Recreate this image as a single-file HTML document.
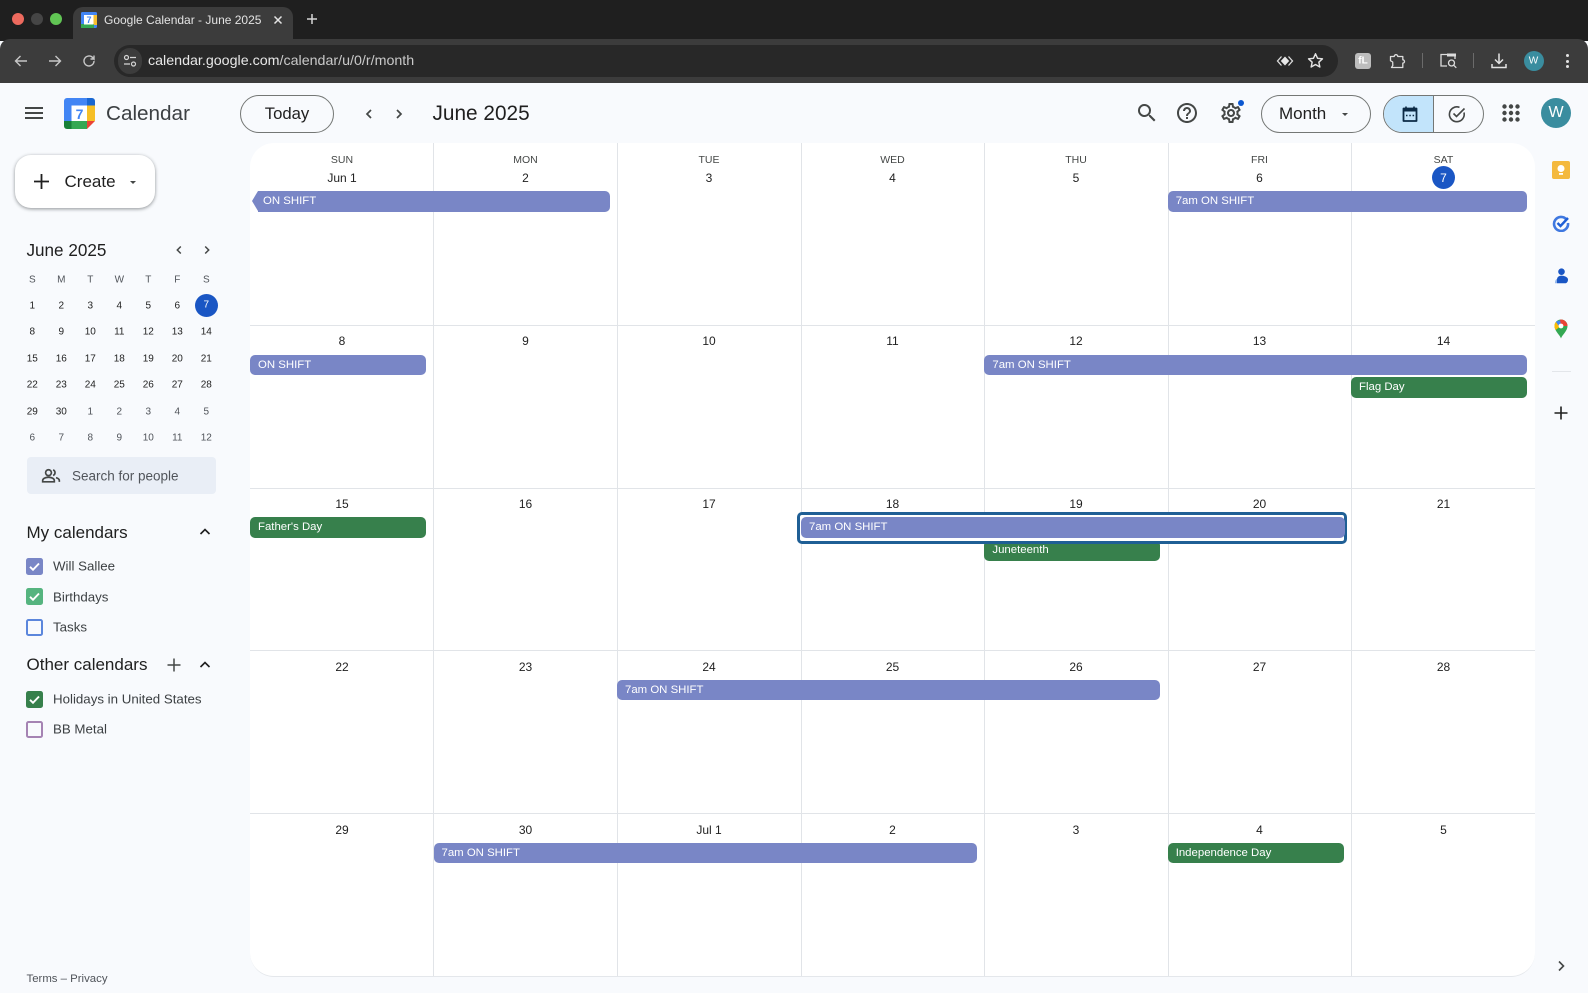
<!DOCTYPE html>
<html><head><meta charset="utf-8"><title>Google Calendar - June 2025</title>
<style>
html,body{margin:0;padding:0;width:1588px;height:993px;overflow:hidden;background:#f8fafd;font-family:"Liberation Sans",sans-serif;color:#1f1f1f}
div,span,svg{position:absolute;box-sizing:border-box}
.c{transform:translate(-50%,-50%);white-space:nowrap}
.l{transform:translateY(-50%);white-space:nowrap}
.d{font-size:12px;color:#1f1f1f}
.h{font-size:10.5px;color:#444746}
.m{font-size:10px;color:#1f1f1f}
.mg{font-size:10px;color:#50545a}
.e{height:20.5px;background:#7986c6;border-radius:5px;color:#fff;font-size:11.4px;line-height:21.5px;padding-left:8px;white-space:nowrap}
.g{background:#37804c}
.v{top:143px;width:1px;height:833px;background:#e1e4e8}
.x{left:0;width:1285px;height:1px;background:#e1e4e8}
.cb{left:26px;width:17px;height:17px;border-radius:2.5px}
.cl{left:53px;font-size:13.3px;color:#3c4043}
.pill{border:1px solid #747775;border-radius:20px}
</style></head><body>

<!-- browser chrome -->
<div style="left:0;top:0;width:1588px;height:41px;background:#1f1f1f"></div>
<div style="left:0;top:39px;width:1588px;height:44px;background:#3c3c3c;border-radius:10px 10px 0 0"></div>
<div style="left:12px;top:13px;width:12px;height:12px;border-radius:50%;background:#ed6a5e"></div>
<div style="left:31px;top:13px;width:12px;height:12px;border-radius:50%;background:#454545"></div>
<div style="left:50px;top:13px;width:12px;height:12px;border-radius:50%;background:#61c554"></div>
<div style="left:73px;top:7px;width:220px;height:36px;background:#3c3c3c;border-radius:10px 10px 0 0"></div>
<svg style="left:81px;top:12px" width="16" height="16" viewBox="0 0 16 16"><rect width="16" height="16" rx="1.5" fill="#4285f4"/><rect x="12" y="3" width="4" height="10" fill="#f5bd2f"/><rect y="12" width="13" height="4" fill="#34a853"/><rect x="3" y="3" width="9.5" height="9.5" fill="#fff"/></svg>
<span class="c" style="left:89px;top:20px;font-size:9px;font-weight:bold;color:#4285f4">7</span>
<span class="l" style="left:104px;top:19.5px;font-size:12px;color:#e3e3e3">Google Calendar - June 2025</span>
<svg style="left:272px;top:14px" width="12" height="12" viewBox="0 0 12 12"><path d="M2.5 2.5l7 7M9.5 2.5l-7 7" stroke="#e3e3e3" stroke-width="1.5"/></svg>
<svg style="left:305px;top:12px" width="14" height="14" viewBox="0 0 14 14"><path d="M7 2v10M2 7h10" stroke="#d5d5d5" stroke-width="1.5"/></svg>
<svg style="left:12px;top:52px" width="18" height="18" viewBox="0 0 18 18"><path d="M15 9H4M8.5 4L3.5 9l5 5" fill="none" stroke="#c7c7c7" stroke-width="1.4"/></svg>
<svg style="left:46px;top:52px" width="18" height="18" viewBox="0 0 18 18"><path d="M3 9h11M9.5 4l5 5-5 5" fill="none" stroke="#c7c7c7" stroke-width="1.4"/></svg>
<svg style="left:80px;top:52px" width="18" height="18" viewBox="0 0 18 18"><path d="M14 9a5 5 0 1 1-1.5-3.6L14 7V3.5M14 7h-3.5" fill="none" stroke="#c7c7c7" stroke-width="1.4"/></svg>
<div style="left:114px;top:45px;width:1224px;height:32px;background:#282828;border-radius:16px"></div>
<div style="left:118px;top:48px;width:24px;height:26px;background:#3c3c3c;border-radius:13px"></div>
<svg style="left:122px;top:53px" width="16" height="16" viewBox="0 0 16 16"><circle cx="4.5" cy="4.5" r="2" fill="none" stroke="#d5d5d5" stroke-width="1.2"/><path d="M8 4.5h6M2 11h6" stroke="#d5d5d5" stroke-width="1.2"/><circle cx="11.5" cy="11" r="2" fill="none" stroke="#d5d5d5" stroke-width="1.2"/></svg>
<span class="l" style="left:148px;top:60.5px;font-size:14.25px;color:#e8e8e8">calendar.google.com<span style="position:static;color:#c9c9c9">/calendar/u/0/r/month</span></span>
<svg style="left:1276px;top:52px" width="18" height="18" viewBox="0 0 18 18"><path d="M5.5 4.5L1.5 9l4 4.5M12.5 4.5l4 4.5-4 4.5" fill="none" stroke="#dcdcdc" stroke-width="1.3"/><path d="M9 4.5L13.2 9 9 13.5 4.8 9z" fill="#e8e8e8"/></svg>
<svg style="left:1306px;top:51px" width="19" height="19" viewBox="0 0 24 24"><path d="M12 3.5l2.6 5.7 6.2.7-4.6 4.2 1.3 6.1L12 17.1l-5.5 3.100 1.3-6.1-4.6-4.2 6.2-.7z" fill="none" stroke="#e3e3e3" stroke-width="1.8" stroke-linejoin="round"/></svg>
<div style="left:1355px;top:53px;width:16px;height:16px;border-radius:3px;background:#bdbdbd"></div>
<span class="c" style="left:1363px;top:61px;font-size:10px;font-weight:bold;color:#fff">fL</span>
<svg style="left:1388px;top:52px" width="18" height="18" viewBox="0 0 18 18"><path d="M2.5 4.5h3.7a1.8 1.8 0 0 1 3.6 0h5v3.300a1.7 1.7 0 0 1 0 3.400v4.300H3.5l1.3-2-.1-3.500-2.200-1.300z" fill="none" stroke="#dcdcdc" stroke-width="1.3" stroke-linejoin="round"/></svg>
<div style="left:1422px;top:53px;width:1px;height:15px;background:#6b6b6b"></div>
<svg style="left:1439px;top:52px" width="20" height="18" viewBox="0 0 20 18"><path d="M8 14H2V2.5h14V7" fill="none" stroke="#dcdcdc" stroke-width="1.3"/><rect x="8" y="1.500" width="9" height="3" fill="#dcdcdc"/><circle cx="12.5" cy="11" r="3" fill="none" stroke="#dcdcdc" stroke-width="1.3"/><path d="M14.8 13.3l2.5 2.5" stroke="#dcdcdc" stroke-width="1.3"/></svg>
<div style="left:1473px;top:53px;width:1px;height:15px;background:#6b6b6b"></div>
<svg style="left:1490px;top:52px" width="18" height="18" viewBox="0 0 18 18"><path d="M9 1.5v10M5 7.500l4 4 4-4" fill="none" stroke="#e3e3e3" stroke-width="1.5"/><path d="M2 12v3.500h14V12" fill="none" stroke="#e3e3e3" stroke-width="1.5"/></svg>
<div style="left:1523.5px;top:51px;width:20px;height:20px;border-radius:50%;background:#3a8d9f"></div>
<span class="c" style="left:1533.5px;top:61px;font-size:10px;color:#fff">W</span>
<div style="left:1565.5px;top:54px;width:3px;height:3px;border-radius:50%;background:#e3e3e3"></div>
<div style="left:1565.5px;top:59.5px;width:3px;height:3px;border-radius:50%;background:#e3e3e3"></div>
<div style="left:1565.5px;top:65px;width:3px;height:3px;border-radius:50%;background:#e3e3e3"></div>

<!-- app header -->
<svg style="left:22px;top:101px" width="24" height="24" viewBox="0 0 24 24"><path d="M3 18h18v-2H3v2zm0-5h18v-2H3v2zm0-7v2h18V6H3z" fill="#444746"/></svg>
<svg style="left:64px;top:98px" width="31" height="31" viewBox="0 0 31 31"><path d="M3 0h20v7.5H7.5V23H0V3a3 3 0 0 1 3-3z" fill="#4285f4"/><path d="M23 0h5a3 3 0 0 1 3 3v4.5h-8z" fill="#1967d2"/><rect x="23" y="7.5" width="8" height="15.5" fill="#f6bf26"/><path d="M0 23h7.5v8H3a3 3 0 0 1-3-3z" fill="#188038"/><rect x="7.5" y="23" width="15.5" height="8" fill="#34a853"/><path d="M23 23h8l-8 8z" fill="#ea4335"/><rect x="7.5" y="7.5" width="15.5" height="15.5" fill="#fff"/></svg>
<span class="c" style="left:79.5px;top:113.5px;font-size:14px;font-weight:bold;color:#4285f4">7</span>
<span class="l" style="left:106px;top:113.5px;font-size:20.7px;color:#3c4043">Calendar</span>
<div class="pill" style="left:240px;top:95px;width:94px;height:38px"></div>
<span class="c" style="left:287px;top:113.5px;font-size:16.7px;color:#1f1f1f">Today</span>
<svg style="left:359.5px;top:104.5px" width="18" height="18" viewBox="0 0 18 18"><path d="M11 5L7 9l4 4" fill="none" stroke="#444746" stroke-width="1.7"/></svg>
<svg style="left:389.5px;top:104.5px" width="18" height="18" viewBox="0 0 18 18"><path d="M7 5l4 4-4 4" fill="none" stroke="#444746" stroke-width="1.7"/></svg>
<span class="l" style="left:432.5px;top:113.5px;font-size:20.8px;color:#1f1f1f">June 2025</span>
<svg style="left:1135px;top:101px" width="24" height="24" viewBox="0 0 24 24"><path d="M15.5 14h-.79l-.28-.27A6.471 6.471 0 0 0 16 9.5 6.5 6.5 0 1 0 9.5 16c1.61 0 3.09-.59 4.23-1.57l.27.28v.79l5 4.99L20.49 19l-4.99-5zm-6 0C7.01 14 5 11.99 5 9.5S7.01 5 9.5 5 14 7.01 14 9.5 11.99 14 9.5 14z" fill="#444746"/></svg>
<svg style="left:1175px;top:101px" width="24" height="24" viewBox="0 0 24 24"><path d="M11 18h2v-2h-2v2zm1-16C6.48 2 2 6.48 2 12s4.48 10 10 10 10-4.48 10-10S17.52 2 12 2zm0 18c-4.41 0-8-3.59-8-8s3.59-8 8-8 8 3.59 8 8-3.59 8-8 8zm0-14c-2.21 0-4 1.79-4 4h2c0-1.1.9-2 2-2s2 .9 2 2c0 2-3 1.75-3 5h2c0-2.25 3-2.5 3-5 0-2.21-1.79-4-4-4z" fill="#444746"/></svg>
<svg style="left:1219px;top:101px" width="24" height="24" viewBox="0 0 24 24"><path d="M19.43 12.98c.04-.32.07-.64.07-.98 0-.34-.03-.66-.07-.98l2.11-1.65c.19-.15.24-.42.12-.64l-2-3.46c-.09-.16-.26-.25-.44-.25-.06 0-.12.01-.17.03l-2.49 1c-.52-.4-1.08-.73-1.69-.98l-.38-2.65C14.46 2.18 14.25 2 14 2h-4c-.25 0-.46.18-.49.42l-.38 2.65c-.61.25-1.17.59-1.69.98l-2.49-1c-.06-.02-.12-.03-.18-.03-.17 0-.34.09-.43.25l-2 3.46c-.13.22-.07.49.12.64l2.11 1.65c-.04.32-.07.65-.07.98 0 .33.03.66.07.98l-2.11 1.65c-.19.15-.24.42-.12.64l2 3.46c.09.16.26.25.44.25.06 0 .12-.01.17-.03l2.49-1c.52.4 1.08.73 1.69.98l.38 2.65c.03.24.24.42.49.42h4c.25 0 .46-.18.49-.42l.38-2.65c.61-.25 1.17-.59 1.69-.98l2.49 1c.06.02.12.03.18.03.17 0 .34-.09.43-.25l2-3.46c.12-.22.07-.49-.12-.64l-2.11-1.65zm-1.98-1.71c.04.31.05.52.05.73 0 .21-.02.43-.05.73l-.14 1.13.89.7 1.08.84-.7 1.21-1.27-.51-1.04-.42-.9.68c-.43.32-.84.56-1.25.73l-1.06.43-.16 1.13-.2 1.35h-1.4l-.19-1.35-.16-1.13-1.06-.43c-.43-.18-.83-.41-1.23-.71l-.91-.7-1.06.43-1.27.51-.7-1.21 1.08-.84.89-.7-.14-1.13c-.03-.31-.05-.54-.05-.74s.02-.43.05-.73l.14-1.13-.89-.7-1.08-.84.7-1.21 1.27.51 1.04.42.9-.68c.43-.32.84-.56 1.25-.73l1.06-.43.16-1.13.2-1.35h1.39l.19 1.35.16 1.13 1.06.43c.43.18.83.41 1.23.71l.91.7 1.06-.43 1.27-.51.7 1.21-1.07.85-.89.7.14 1.13zM12 8c-2.21 0-4 1.79-4 4s1.79 4 4 4 4-1.79 4-4-1.79-4-4-4zm0 6c-1.1 0-2-.9-2-2s.9-2 2-2 2 .9 2 2-.9 2-2 2z" fill="#444746"/></svg>
<div style="left:1238px;top:100px;width:6px;height:6px;border-radius:50%;background:#0b57d0"></div>
<div class="pill" style="left:1261px;top:95px;width:110px;height:38px"></div>
<span class="l" style="left:1279px;top:113.5px;font-size:17px;color:#1f1f1f">Month</span>
<div style="left:1341.5px;top:112.5px;width:0;height:0;border-left:3.5px solid transparent;border-right:3.5px solid transparent;border-top:3.5px solid #444746"></div>
<div class="pill" style="left:1383px;top:95px;width:101px;height:38px;overflow:hidden"><div style="left:0;top:0;width:49px;height:36px;background:#c2e4fb"></div><div style="left:49px;top:0;width:1px;height:36px;background:#747775"></div></div>
<svg style="left:1400px;top:104px" width="20" height="20" viewBox="0 0 20 20"><path d="M3.500 4.500h13v12.500h-13z" fill="none" stroke="#0c2a45" stroke-width="1.800" stroke-linejoin="round"/><rect x="3" y="4" width="14" height="3.500" fill="#0c2a45"/><path d="M6 2.500v3M14 2.500v3" stroke="#0c2a45" stroke-width="1.600"/><path d="M6 11.500h1.500M9.300 11.500h1.500M12.600 11.500h1.500" stroke="#0c2a45" stroke-width="1.500"/></svg>
<svg style="left:1447px;top:104px" width="20" height="20" viewBox="0 0 20 20"><path d="M17 8.500A7.400 7.400 0 1 1 12.500 3.400" fill="none" stroke="#444746" stroke-width="1.600"/><path d="M6.500 9.500l3 3 8-8" fill="none" stroke="#444746" stroke-width="1.600"/></svg>
<svg style="left:1502px;top:104px" width="18" height="18" viewBox="0 0 18 18" fill="#444746"><circle cx="2.500" cy="2.500" r="2.200"/><circle cx="9" cy="2.500" r="2.200"/><circle cx="15.500" cy="2.500" r="2.200"/><circle cx="2.500" cy="9" r="2.200"/><circle cx="9" cy="9" r="2.200"/><circle cx="15.500" cy="9" r="2.200"/><circle cx="2.500" cy="15.500" r="2.200"/><circle cx="9" cy="15.500" r="2.200"/><circle cx="15.500" cy="15.500" r="2.200"/></svg>
<div style="left:1541px;top:98px;width:30px;height:30px;border-radius:50%;background:#3a8d9f"></div>
<span class="c" style="left:1556px;top:113px;font-size:16px;color:#fff">W</span>

<!-- create -->
<div style="left:15px;top:155px;width:140px;height:53px;background:#fff;border-radius:16px;box-shadow:0 1px 3px rgba(60,64,67,.4),0 1px 4px rgba(60,64,67,.2)"></div>
<svg style="left:31px;top:171px" width="21" height="21" viewBox="0 0 21 21"><path d="M10.500 3v15M3 10.500h15" stroke="#1f1f1f" stroke-width="1.800"/></svg>
<span class="l" style="left:64.5px;top:181.5px;font-size:17px;color:#1f1f1f">Create</span>
<div style="left:129.5px;top:180.5px;width:0;height:0;border-left:3.5px solid transparent;border-right:3.5px solid transparent;border-top:3.5px solid #444746"></div>

<!-- mini calendar -->
<span class="l" style="left:26.5px;top:250.5px;font-size:17.1px;color:#1f1f1f">June 2025</span>
<svg style="left:170.500px;top:242px" width="16" height="16" viewBox="0 0 16 16"><path d="M9.800 4.500L6.300 8l3.500 3.500" fill="none" stroke="#444746" stroke-width="1.500"/></svg>
<svg style="left:198.500px;top:242px" width="16" height="16" viewBox="0 0 16 16"><path d="M6.200 4.500L9.700 8l-3.500 3.500" fill="none" stroke="#444746" stroke-width="1.500"/></svg>
<span class="c mg" style="left:32.3px;top:279.5px">S</span><span class="c mg" style="left:61.3px;top:279.5px">M</span><span class="c mg" style="left:90.3px;top:279.5px">T</span><span class="c mg" style="left:119.3px;top:279.5px">W</span><span class="c mg" style="left:148.3px;top:279.5px">T</span><span class="c mg" style="left:177.3px;top:279.5px">F</span><span class="c mg" style="left:206.3px;top:279.5px">S</span>
<span class="c m" style="left:32.3px;top:306px">1</span><span class="c m" style="left:61.3px;top:306px">2</span><span class="c m" style="left:90.3px;top:306px">3</span><span class="c m" style="left:119.3px;top:306px">4</span><span class="c m" style="left:148.3px;top:306px">5</span><span class="c m" style="left:177.3px;top:306px">6</span>
<div style="left:194.8px;top:293.8px;width:23px;height:23px;border-radius:50%;background:#1a56c4"></div><span class="c m" style="left:206.3px;top:305.3px;color:#fff">7</span>
<span class="c m" style="left:32.3px;top:332.4px">8</span><span class="c m" style="left:61.3px;top:332.4px">9</span><span class="c m" style="left:90.3px;top:332.4px">10</span><span class="c m" style="left:119.3px;top:332.4px">11</span><span class="c m" style="left:148.3px;top:332.4px">12</span><span class="c m" style="left:177.3px;top:332.4px">13</span><span class="c m" style="left:206.3px;top:332.4px">14</span>
<span class="c m" style="left:32.3px;top:358.9px">15</span><span class="c m" style="left:61.3px;top:358.9px">16</span><span class="c m" style="left:90.3px;top:358.9px">17</span><span class="c m" style="left:119.3px;top:358.9px">18</span><span class="c m" style="left:148.3px;top:358.9px">19</span><span class="c m" style="left:177.3px;top:358.9px">20</span><span class="c m" style="left:206.3px;top:358.9px">21</span>
<span class="c m" style="left:32.3px;top:385.4px">22</span><span class="c m" style="left:61.3px;top:385.4px">23</span><span class="c m" style="left:90.3px;top:385.4px">24</span><span class="c m" style="left:119.3px;top:385.4px">25</span><span class="c m" style="left:148.3px;top:385.4px">26</span><span class="c m" style="left:177.3px;top:385.4px">27</span><span class="c m" style="left:206.3px;top:385.4px">28</span>
<span class="c m" style="left:32.3px;top:411.9px">29</span><span class="c m" style="left:61.3px;top:411.9px">30</span><span class="c mg" style="left:90.3px;top:411.9px">1</span><span class="c mg" style="left:119.3px;top:411.9px">2</span><span class="c mg" style="left:148.3px;top:411.9px">3</span><span class="c mg" style="left:177.3px;top:411.9px">4</span><span class="c mg" style="left:206.3px;top:411.9px">5</span>
<span class="c mg" style="left:32.3px;top:438.4px">6</span><span class="c mg" style="left:61.3px;top:438.4px">7</span><span class="c mg" style="left:90.3px;top:438.4px">8</span><span class="c mg" style="left:119.3px;top:438.4px">9</span><span class="c mg" style="left:148.3px;top:438.4px">10</span><span class="c mg" style="left:177.3px;top:438.4px">11</span><span class="c mg" style="left:206.3px;top:438.4px">12</span>

<div style="left:26.5px;top:457px;width:189px;height:37px;background:#e9eef6;border-radius:4px"></div>
<svg style="left:41px;top:466px" width="20" height="20" viewBox="0 0 24 24"><circle cx="9" cy="8" r="3.5" fill="none" stroke="#444746" stroke-width="2"/><path d="M2 19v-1.500c0-2.500 3.500-4 7-4s7 1.500 7 4V19z" fill="none" stroke="#444746" stroke-width="2"/><path d="M14.500 4.700a3.500 3.500 0 0 1 0 6.600M18 14c2.300.6 4 1.800 4 3.500V19" fill="none" stroke="#444746" stroke-width="2"/></svg>
<span class="l" style="left:72px;top:475.5px;font-size:13.5px;color:#50545a">Search for people</span>

<!-- my calendars -->
<span class="l" style="left:26.5px;top:532.5px;font-size:17px;color:#1f1f1f">My calendars</span>
<svg style="left:197px;top:524px" width="16" height="16" viewBox="0 0 16 16"><path d="M3.500 10L8 5.500l4.500 4.500" fill="none" stroke="#1f1f1f" stroke-width="1.600"/></svg>
<div class="cb" style="top:558px;background:#7986c6"></div>
<svg style="left:26px;top:558px" width="17" height="17" viewBox="0 0 17 17"><path d="M4 8.800l3 3 6-6.300" fill="none" stroke="#fff" stroke-width="1.900"/></svg>
<span class="l cl" style="top:566px">Will Sallee</span>
<div class="cb" style="top:588px;background:#55b47f"></div>
<svg style="left:26px;top:588px" width="17" height="17" viewBox="0 0 17 17"><path d="M4 8.800l3 3 6-6.300" fill="none" stroke="#fff" stroke-width="1.900"/></svg>
<span class="l cl" style="top:596.5px">Birthdays</span>
<div class="cb" style="top:618.5px;border:2px solid #5b86dc"></div>
<span class="l cl" style="top:626.5px">Tasks</span>
<span class="l" style="left:26.5px;top:665px;font-size:17px;color:#1f1f1f">Other calendars</span>
<svg style="left:166px;top:657px" width="16" height="16" viewBox="0 0 16 16"><path d="M8 1.500v13M1.500 8h13" stroke="#444746" stroke-width="1.500"/></svg>
<svg style="left:197px;top:657px" width="16" height="16" viewBox="0 0 16 16"><path d="M3.500 10L8 5.500l4.500 4.500" fill="none" stroke="#1f1f1f" stroke-width="1.600"/></svg>
<div class="cb" style="top:690.5px;background:#37804c"></div>
<svg style="left:26px;top:690.5px" width="17" height="17" viewBox="0 0 17 17"><path d="M4 8.800l3 3 6-6.300" fill="none" stroke="#fff" stroke-width="1.900"/></svg>
<span class="l cl" style="top:698.5px">Holidays in United States</span>
<div class="cb" style="top:720.5px;border:2px solid #a583b3"></div>
<span class="l cl" style="top:728.5px">BB Metal</span>
<span class="l" style="left:26.5px;top:978.5px;font-size:11.4px;color:#50545a">Terms – Privacy</span>

<!-- grid -->
<div style="left:250px;top:143px;width:1285px;height:834px;background:#fff;border-radius:24px;overflow:hidden;border-bottom:1px solid #e4e7eb">
 <div class="x" style="top:182px"></div><div class="x" style="top:345px"></div><div class="x" style="top:507px"></div><div class="x" style="top:670px"></div>
</div>
<div class="v" style="left:433px"></div><div class="v" style="left:616.5px"></div><div class="v" style="left:801px"></div><div class="v" style="left:984.4px"></div><div class="v" style="left:1167.7px"></div><div class="v" style="left:1351px"></div>

<span class="c h" style="left:342px;top:159.5px">SUN</span><span class="c h" style="left:525.5px;top:159.5px">MON</span><span class="c h" style="left:709px;top:159.5px">TUE</span><span class="c h" style="left:892.5px;top:159.5px">WED</span><span class="c h" style="left:1076px;top:159.5px">THU</span><span class="c h" style="left:1259.5px;top:159.5px">FRI</span><span class="c h" style="left:1443.5px;top:159.5px">SAT</span>

<span class="c d" style="left:342px;top:177.5px">Jun 1</span><span class="c d" style="left:525.5px;top:177.5px">2</span><span class="c d" style="left:709px;top:177.5px">3</span><span class="c d" style="left:892.5px;top:177.5px">4</span><span class="c d" style="left:1076px;top:177.5px">5</span><span class="c d" style="left:1259.5px;top:177.5px">6</span>
<div style="left:1432px;top:166px;width:23px;height:23px;border-radius:50%;background:#1a56c4"></div><span class="c d" style="left:1443.5px;top:177.5px;color:#fff">7</span>

<span class="c d" style="left:342px;top:340.5px">8</span><span class="c d" style="left:525.5px;top:340.5px">9</span><span class="c d" style="left:709px;top:340.5px">10</span><span class="c d" style="left:892.5px;top:340.5px">11</span><span class="c d" style="left:1076px;top:340.5px">12</span><span class="c d" style="left:1259.5px;top:340.5px">13</span><span class="c d" style="left:1443.5px;top:340.5px">14</span>
<span class="c d" style="left:342px;top:503.5px">15</span><span class="c d" style="left:525.5px;top:503.5px">16</span><span class="c d" style="left:709px;top:503.5px">17</span><span class="c d" style="left:892.5px;top:503.5px">18</span><span class="c d" style="left:1076px;top:503.5px">19</span><span class="c d" style="left:1259.5px;top:503.5px">20</span><span class="c d" style="left:1443.5px;top:503.5px">21</span>
<span class="c d" style="left:342px;top:667px">22</span><span class="c d" style="left:525.5px;top:667px">23</span><span class="c d" style="left:709px;top:667px">24</span><span class="c d" style="left:892.5px;top:667px">25</span><span class="c d" style="left:1076px;top:667px">26</span><span class="c d" style="left:1259.5px;top:667px">27</span><span class="c d" style="left:1443.5px;top:667px">28</span>
<span class="c d" style="left:342px;top:830px">29</span><span class="c d" style="left:525.5px;top:830px">30</span><span class="c d" style="left:709px;top:830px">Jul 1</span><span class="c d" style="left:892.5px;top:830px">2</span><span class="c d" style="left:1076px;top:830px">3</span><span class="c d" style="left:1259.5px;top:830px">4</span><span class="c d" style="left:1443.5px;top:830px">5</span>

<!-- events -->
<div class="e" style="left:258px;top:191px;width:352px;border-radius:0 5px 5px 0;padding-left:5px">ON SHIFT</div>
<div style="left:252px;top:191px;width:0;height:0;border-top:10.25px solid transparent;border-bottom:10.25px solid transparent;border-right:6px solid #7986c6"></div>
<div class="e" style="left:1167.7px;top:191px;width:359.3px">7am ON SHIFT</div>
<div class="e" style="left:250px;top:354.5px;width:176px">ON SHIFT</div>
<div class="e" style="left:984.4px;top:354.5px;width:542.6px">7am ON SHIFT</div>
<div class="e g" style="left:1351px;top:377px;width:176px">Flag Day</div>
<div class="e g" style="left:250px;top:517px;width:176px">Father's Day</div>
<div class="e g" style="left:984.4px;top:540px;width:175.6px">Juneteenth</div>
<div style="left:797px;top:512px;width:550px;height:32px;background:#fff;border:3px solid #1f5f95;border-radius:5px"></div>
<div class="e" style="left:801px;top:517px;width:544px">7am ON SHIFT</div>
<div class="e" style="left:617px;top:679.5px;width:543px">7am ON SHIFT</div>
<div class="e" style="left:433.5px;top:842.5px;width:543px">7am ON SHIFT</div>
<div class="e g" style="left:1167.7px;top:842.5px;width:176.3px">Independence Day</div>

<!-- side panel -->
<svg style="left:1552px;top:161px" width="18" height="18" viewBox="0 0 18 18"><rect width="18" height="18" rx="2" fill="#f4b93e"/><circle cx="9" cy="7.5" r="3.5" fill="#fff"/><rect x="7" y="12" width="4" height="1.8" fill="#fff"/></svg>
<svg style="left:1552px;top:214px" width="18" height="18" viewBox="0 0 18 18"><path d="M14.5 5.5A7 7 0 1 0 16 9" fill="none" stroke="#3f78e0" stroke-width="2.6"/><path d="M5.5 9l3 3 7.500-8" fill="none" stroke="#1f5fd6" stroke-width="2.4"/></svg>
<svg style="left:1552px;top:267px" width="18" height="18" viewBox="0 0 18 18"><circle cx="9.5" cy="4.700" r="3.300" fill="#1a56c4"/><path d="M5 16.300v-3.800C5 10 7 8.600 9.500 8.600s6.500 1.400 6.500 3.900c0 2-1 3.800-3 3.800z" fill="#1a56c4"/><path d="M3 16.300c0-2.500.6-3.800 2-4.300v4.300z" fill="#8fb4ec"/></svg>
<svg style="left:1553px;top:319px" width="16" height="20" viewBox="0 0 16 20"><path d="M8 19.500C7 16 1.500 12 1.500 7a6.500 6.500 0 0 1 13 0c0 5-5.500 9-6.500 12.500z" fill="#34a853"/><path d="M3 3l5 4-5.500 4C1.800 9.500 1.500 8.300 1.500 7 1.500 5 2 4 3 3z" fill="#fbbc04"/><path d="M3 3a6.500 6.500 0 0 1 4-1.500L9 4 5.500 6.500z" fill="#4285f4"/><path d="M7 .6a6.500 6.500 0 0 1 7.500 6.400L8 7z" fill="#ea4335"/><circle cx="8" cy="7" r="2.400" fill="#fff"/></svg>
<div style="left:1552px;top:371px;width:19px;height:1px;background:#e3e6ea"></div>
<svg style="left:1553px;top:405px" width="16" height="16" viewBox="0 0 16 16"><path d="M8 1.500v13M1.500 8h13" stroke="#1f1f1f" stroke-width="1.6"/></svg>
<svg style="left:1553px;top:958px" width="16" height="16" viewBox="0 0 16 16"><path d="M6 3.5L10.5 8 6 12.5" fill="none" stroke="#444746" stroke-width="1.6"/></svg>
</body></html>
